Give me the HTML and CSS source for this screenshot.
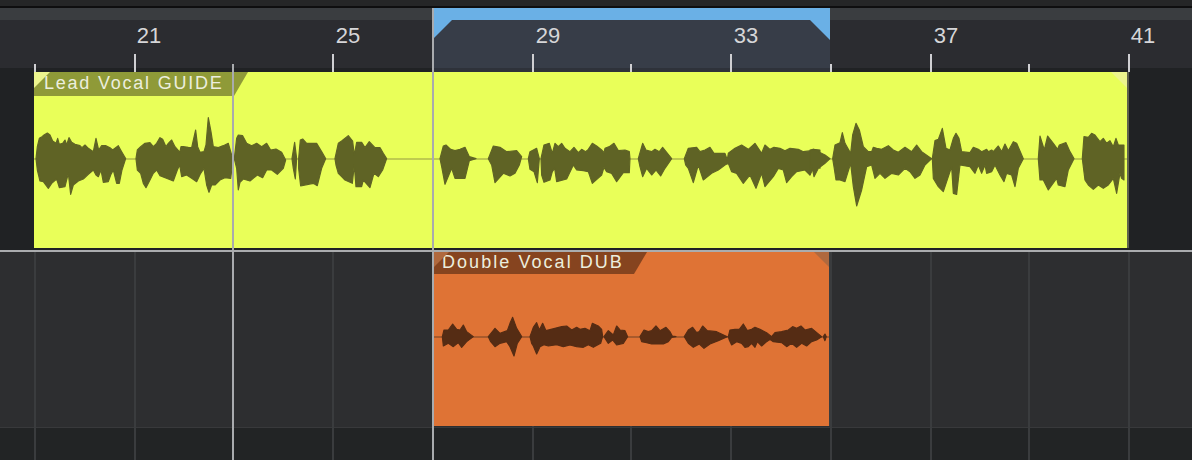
FILE: index.html
```html
<!DOCTYPE html>
<html lang="en">
  <head>
    <meta charset="UTF-8" />
    <meta name="viewport" content="width=device-width, initial-scale=1.0" />
    <title>Arrangement</title>
    <link rel="stylesheet" href="styles.css">
  </head>
  <body>
    <div class="timeline">
      <div class="top-bar"></div>
      <div class="top-line"></div>
      <div class="loop-strip"></div>
      <div class="ruler"></div>
      <div class="track track-one"></div>
      <div class="separator"></div>
      <div class="track track-two"></div>
      <div class="footer-line"></div>
      <div class="track footer"></div>

      <!-- grid lines behind the second track -->
      <div class="grid">
        <i style="left:34px"></i><i style="left:134px"></i><i style="left:232px"></i><i style="left:332px"></i>
        <i style="left:532px"></i><i style="left:630px"></i><i style="left:730px"></i><i style="left:830px"></i>
        <i style="left:930px"></i><i style="left:1028px"></i><i style="left:1128px"></i>
      </div>

      <!-- loop range -->
      <div class="loop-shade"></div>
      <svg class="loop-cap" viewBox="434 8 396 32">
        <polygon points="434,8 830,8 830,40 810,20 452,20 434,38" />
      </svg>

      <!-- ruler -->
      <span class="bar-num" style="left:149px">21</span>
      <span class="bar-num" style="left:348px">25</span>
      <span class="bar-num" style="left:548px">29</span>
      <span class="bar-num" style="left:746px">33</span>
      <span class="bar-num" style="left:946px">37</span>
      <span class="bar-num" style="left:1143px">41</span>

      <i class="tick minor" style="left:34px"></i>
      <i class="tick major" style="left:134px"></i>
      <i class="tick major" style="left:332px"></i>
      <i class="tick major" style="left:532px"></i>
      <i class="tick minor" style="left:630px"></i>
      <i class="tick major" style="left:730px"></i>
      <i class="tick minor" style="left:830px"></i>
      <i class="tick major" style="left:930px"></i>
      <i class="tick minor" style="left:1028px"></i>
      <i class="tick major" style="left:1128px"></i>

      <!-- clips -->
      <div class="clip clip-lead">
        <div class="corner corner-left"></div>
        <div class="corner corner-right"></div>
        <div class="clip-label">Lead Vocal GUIDE</div>
        <svg class="wave" viewBox="34 72 1093 176">
          <rect class="mid" x="34" y="158" width="1093" height="2" />
          <g class="peaks" transform="translate(20 105) scale(.3333)">
            <polygon points="48,161 52,125 58,100 66,95 72,90 82,84 90,90 98,108 108,115 113,100 118,118 128,115 135,105 140,120 147,98 155,112 165,118 180,122 186,128 195,120 205,130 220,140 228,100 236,135 245,122 258,122 270,128 278,135 295,122 305,140 317,161 306,195 298,235 290,235 280,195 272,210 265,230 250,232 243,195 235,215 228,210 220,195 205,208 190,222 175,228 160,240 152,268 145,205 135,245 118,248 110,222 95,235 85,250 70,230 60,228 52,195" />
            <polygon points="348,161 352,135 362,125 375,115 390,113 400,125 410,115 420,98 428,103 438,125 445,115 455,105 465,125 478,140 479,145 483,125 490,125 505,127 515,128 527,75 533,125 540,142 552,140 558,120 565,38 573,80 580,125 595,128 610,122 625,115 635,150 640,161 632,220 615,218 600,225 585,240 575,240 567,262 560,240 552,190 542,205 530,230 515,220 500,210 485,215 479,180 472,195 460,228 445,222 420,212 410,195 400,205 390,225 378,248 370,235 362,205 352,195" />
            <polygon points="643,161 650,100 655,90 668,92 680,115 695,122 710,115 725,125 740,115 752,135 768,132 785,142 797,165 790,190 772,208 755,195 740,195 728,218 712,210 690,228 670,222 660,232 655,255 650,190" />
            <polygon points="816,161 824,112 830,161 826,222 820,190" />
            <polygon points="836,161 841,105 848,102 860,115 875,115 890,115 905,140 917,161 905,190 892,242 880,235 865,238 842,243 836,190" />
            <polygon points="945,161 955,115 965,108 985,92 998,108 1003,150 1010,112 1025,112 1035,128 1048,110 1065,128 1080,128 1090,145 1100,161 1088,195 1075,215 1062,205 1050,248 1030,225 1025,245 1008,245 1003,180 997,235 975,225 965,215 955,205 948,180" />
          </g>
          <g class="peaks" transform="translate(420 110) scale(.3333)">
            <polygon points="60,146 70,108 78,105 92,118 105,122 120,118 135,112 148,140 168,146 148,152 135,205 105,205 95,175 75,223 65,170" />
            <polygon points="205,146 220,108 240,112 260,125 290,122 305,140 298,165 285,190 270,198 250,190 225,218 215,165" />
            <polygon points="325,146 330,125 350,115 358,146 352,218 342,185 330,178" />
            <polygon points="363,146 372,105 388,100 397,130 405,100 415,110 425,100 435,115 450,125 462,112 475,128 485,118 497,125 505,118 517,100 530,108 545,120 552,128 555,115 568,110 582,100 595,122 615,120 628,125 630,146 628,188 610,188 590,215 575,190 560,185 552,172 545,195 517,220 505,185 490,182 470,180 460,165 440,207 410,215 404,175 397,185 390,210 372,217 365,195" />
            <polygon points="655,146 668,100 678,120 695,125 705,118 718,125 728,112 755,146 735,175 722,198 708,180 695,195 680,175 668,200 660,170" />
            <polygon points="793,146 805,115 830,112 840,125 855,120 870,112 882,130 915,130 922,150 925,130 945,115 965,105 985,118 1005,100 1025,130 1035,105 1050,118 1062,112 1080,115 1095,122 1110,115 1135,118 1150,125 1175,122 1180,118 1200,120 1200,175 1185,165 1170,195 1155,180 1130,185 1115,200 1100,218 1090,180 1075,175 1060,200 1035,230 1025,190 1008,235 990,195 970,220 950,190 935,185 925,160 915,165 895,180 875,190 850,210 835,165 820,218 805,175 797,165" />
          </g>
          <g class="peaks" transform="translate(810 110) scale(.3333)">
            <polygon points="0,120 10,118 25,125 45,135 60,146 45,160 25,175 12,200 5,165 0,195" />
            <polygon points="68,146 75,105 90,98 97,68 105,100 122,130 128,75 138,40 148,60 160,110 175,125 185,125 190,112 200,115 215,118 235,107 250,120 265,127 285,112 305,125 320,105 335,125 365,146 345,165 330,195 315,205 300,185 285,175 265,195 245,190 225,205 210,190 195,205 185,165 170,170 155,240 140,288 130,230 122,160 105,215 90,210 78,210 72,170" />
            <polygon points="367,146 375,92 385,88 397,55 408,115 420,120 430,85 438,70 447,85 455,125 480,128 490,112 505,118 515,125 530,118 535,125 545,120 550,125 565,108 575,125 585,102 595,122 610,95 620,100 640,146 625,175 615,230 605,195 590,190 582,215 570,195 555,165 545,185 530,190 525,165 515,190 505,165 495,190 480,170 450,165 440,253 430,250 425,170 400,245 385,230 370,205" />
            <polygon points="685,146 690,78 703,120 713,78 730,100 743,118 748,105 768,98 780,125 792,146 775,180 765,230 745,225 740,205 715,240 700,210 690,210" />
            <polygon points="817,146 822,80 835,82 845,70 855,75 870,95 880,85 890,100 900,92 910,110 918,85 925,105 942,105 942,210 935,205 930,190 920,250 910,205 895,225 880,235 865,225 850,238 835,225 825,210" />
          </g>
        </svg>
      </div>

      <div class="clip clip-double">
        <div class="corner corner-left"></div>
        <div class="corner corner-right"></div>
        <div class="clip-label">Double Vocal DUB</div>
        <svg class="wave" viewBox="434 252 395 174">
          <rect class="mid" x="434" y="336" width="395" height="2" />
          <g class="peaks" transform="translate(420 240) scale(.3333)">
            <polygon points="67,290 72,270 85,270 98,252 110,268 120,270 130,255 140,275 160,290 140,305 125,322 115,308 100,320 85,310 70,318" />
            <polygon points="205,290 225,265 240,280 262,272 270,250 278,232 290,265 305,290 292,310 282,348 270,320 260,305 240,310 225,320 212,305" />
            <polygon points="330,290 340,262 350,248 358,270 368,250 378,272 405,265 425,260 440,258 455,270 470,262 480,268 495,265 510,272 517,250 535,258 545,268 548,290 542,310 520,322 505,314 490,322 470,320 450,315 430,320 410,314 385,318 372,314 360,320 350,342 340,318 335,310" />
            <polygon points="552,290 565,272 580,285 590,258 600,270 615,272 623,290 610,310 590,315 578,300 565,310" />
            <polygon points="660,290 672,270 685,275 695,272 708,258 720,272 738,262 750,275 757,288 768,290 755,292 745,305 730,312 710,312 695,312 680,308 665,305" />
            <polygon points="793,290 805,270 818,262 830,278 838,275 848,258 862,272 890,275 922,290 895,302 870,312 852,325 838,312 820,322 805,310" />
            <polygon points="925,290 930,270 945,268 958,268 970,252 982,272 995,268 1005,262 1020,268 1040,278 1055,290 1065,278 1085,275 1105,270 1118,260 1130,265 1143,258 1155,270 1175,265 1205,290 1190,300 1175,305 1160,318 1145,310 1130,322 1115,310 1100,320 1085,308 1060,305 1050,298 1040,305 1025,318 1012,305 1005,322 995,310 985,320 975,322 965,310 950,305 935,315 928,300" />
            <polygon points="1210,290 1215,282 1219,290 1215,302" />
          </g>
        </svg>
      </div>

      <!-- locators -->
      <i class="locator locator-a"></i>
      <i class="locator locator-b"></i>
    </div>
  </body>
</html>
```
FILE: styles.css
```css
html, body {
  margin: 0;
  height: 100%;
  overflow: hidden;
  background: #202224;
}

.timeline {
  position: relative;
  display: flex;
  flex-direction: column;
  width: 1192px;
  height: 460px;
  overflow: hidden;
  font-family: "Liberation Sans", Arial, sans-serif;
}

.top-bar {
  height: 6px;
  background: #252627;
}

.top-line {
  height: 2px;
  background: #0e0e0f;
}

.loop-strip {
  height: 12px;
  background: #3a3d40;
}

.ruler {
  height: 48px;
  background: #2b2c30;
}

.track-one {
  height: 182px;
  background: #202224;
}

.separator {
  height: 2px;
  background: #aaacae;
}

.track-two {
  height: 175px;
  background: #2d2e30;
}

.footer-line {
  height: 1px;
  background: #38393b;
}

.footer {
  height: 32px;
  background: #222425;
}

.grid i {
  position: absolute;
  top: 252px;
  bottom: 0;
  width: 2px;
  background: #3a3c3e;
}

.loop-shade {
  position: absolute;
  left: 434px;
  top: 20px;
  width: 396px;
  height: 48px;
  background: #373d48;
  border-bottom: 4px solid #2e323a;
}

.loop-cap {
  position: absolute;
  left: 434px;
  top: 8px;
  width: 396px;
  height: 32px;
  fill: #6ab0e6;
}

.bar-num {
  position: absolute;
  top: 24px;
  transform: translateX(-50%);
  font-size: 22px;
  line-height: 24px;
  color: #d6d6d8;
}

.tick {
  position: absolute;
  bottom: 388px;
  width: 2px;
  background: #cfcfd2;
}

.tick.major {
  top: 54px;
}

.tick.minor {
  top: 64px;
}

.clip {
  position: absolute;
  overflow: hidden;
}

.clip-lead {
  left: 34px;
  top: 72px;
  width: 1093px;
  height: 176px;
  background: #e9ff59;
  border-right: 2px solid #5f614c;
}

.clip-double {
  left: 434px;
  top: 252px;
  width: 395px;
  height: 174px;
  background: #df7335;
  border-right: 2px solid #3a3c3e;
}

.clip-label {
  position: relative;
  box-sizing: border-box;
  font-size: 18px;
  white-space: nowrap;
  color: #eceede;
}

.clip-lead .clip-label {
  width: 214px;
  height: 24px;
  padding-left: 10px;
  letter-spacing: 1.78px;
  line-height: 23px;
  background: #8f9a38;
  clip-path: polygon(0 0, 100% 0, 200px 100%, 0 100%);
}

.clip-double .clip-label {
  width: 213px;
  height: 22px;
  padding-left: 8px;
  letter-spacing: 2.05px;
  line-height: 21px;
  background: #86441f;
  clip-path: polygon(0 0, 100% 0, 200px 100%, 0 100%);
}

.corner {
  position: absolute;
  top: 0;
  z-index: 1;
  width: 16px;
  height: 16px;
}

.clip-lead .corner {
  background: #edf58e;
}

.clip-double .corner {
  width: 15px;
  height: 15px;
  background: #b0693e;
}

.corner-left {
  left: 0;
  clip-path: polygon(0 0, 100% 0, 0 100%);
}

.corner-right {
  right: 0;
  clip-path: polygon(0 0, 100% 0, 100% 100%);
}

.wave {
  position: absolute;
  left: 0;
  top: 0;
  width: 100%;
  height: 100%;
}

.peaks {
  stroke-width: 3.5;
  stroke-linejoin: round;
}

.clip-lead .wave {
  fill: #5f6325;
}

.clip-lead .peaks {
  stroke: #5f6325;
}

.clip-lead .mid {
  fill: #bfcc4e;
}

.clip-double .wave {
  fill: #552c14;
}

.clip-double .peaks {
  stroke: #552c14;
}

.clip-double .mid {
  fill: #a85a2c;
}

.locator {
  position: absolute;
  bottom: 0;
  width: 2px;
  background: #a9abae;
}

.locator-a {
  left: 232px;
  top: 64px;
}

.locator-b {
  left: 432px;
  top: 8px;
}
```
